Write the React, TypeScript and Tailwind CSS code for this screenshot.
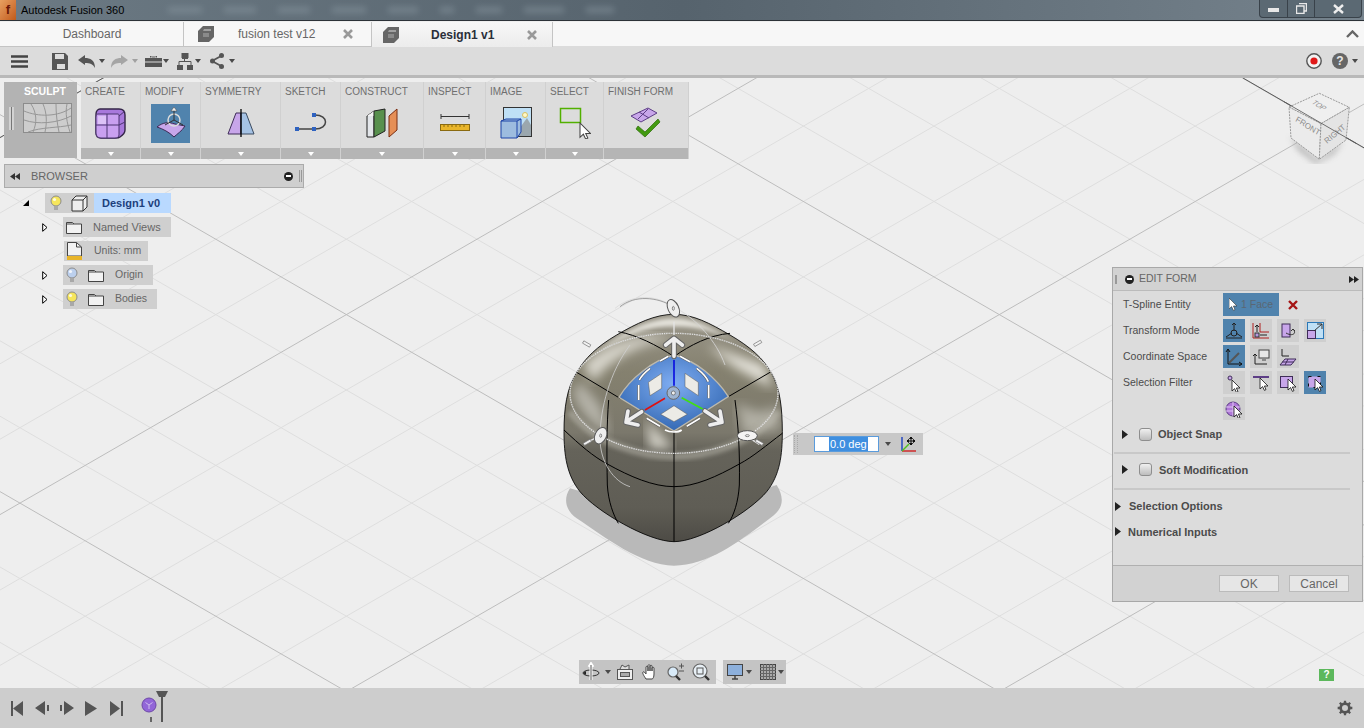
import type { ReactNode } from 'react';

const FONT = '[font-family:"Liberation_Sans",Arial,sans-serif]';

function Ic({ w, h, children, className }: { w: number; h: number; children: ReactNode; className?: string }) {
  return (
    <svg width={w} height={h} viewBox={`0 0 ${w} ${h}`} className={`shrink-0 ${className ?? ''}`}>
      {children}
    </svg>
  );
}

function Caret({ className }: { className?: string }) {
  return (
    <Ic w={6} h={4} className={className}>
      <path d="M0 0h6L3 4z" fill="#4a4a4a" />
    </Ic>
  );
}

function GridFloor() {
  const s = 0.5774;
  const minor: string[] = [];
  const major: string[] = [];
  for (let k = -20; k < 20; k++) {
    const c = 114.6 + 75.4 * k;
    const d = 514.6 + 75.4 * k;
    const a = `M0 ${c}L1364 ${c + 1364 * s}`;
    const b = `M0 ${d}L1364 ${d - 1364 * s}`;
    (k % 5 === 0 ? major : minor).push(a);
    (k % 5 === 0 ? major : minor).push(b);
  }
  return (
    <svg className="absolute inset-0" width={1364} height={610} viewBox="0 78 1364 610">
      <path d={minor.join('')} stroke="#dedede" strokeWidth="1" fill="none" />
      <path d={major.join('')} stroke="#bdbdbd" strokeWidth="1" fill="none" />
      <path d="M0 137.6L238 0M1243 78L1364 147.8" stroke="#5a5a5a" strokeWidth="1" fill="none" />
    </svg>
  );
}

function ViewCube() {
  return (
    <svg className="absolute left-[1284px] top-[10px]" width={72} height={76} viewBox="0 0 72 76">
      <defs>
        <filter id="cubeBlur"><feGaussianBlur stdDeviation="3" /></filter>
      </defs>
      <path d="M6 48L34 72L60 52L50 66L32 76L14 62z" fill="#999" opacity=".7" filter="url(#cubeBlur)" />
      <path d="M35.3 5.3L65.3 19.3L37 35.7L5 19z" fill="#efefef" stroke="#999" strokeDasharray="2 1" />
      <path d="M5 19L37 35.7L35.3 71.3L7 50z" fill="#ebebeb" stroke="#999" strokeDasharray="2 1" />
      <path d="M37 35.7L65.3 19.3L62 52L35.3 71.3z" fill="#e4e4e4" stroke="#999" strokeDasharray="2 1" />
      <text x="0" y="0" transform="translate(27 15) rotate(32) skewX(-25)" fontSize="7" fill="#8c8c8c" fontFamily="Liberation Sans">TOP</text>
      <text x="0" y="0" transform="translate(11 33) rotate(28) skewY(4)" fontSize="8" fill="#8c8c8c" fontFamily="Liberation Sans">FRONT</text>
      <text x="0" y="0" transform="translate(43 56) rotate(-40)" fontSize="8" fill="#8c8c8c" fontFamily="Liberation Sans">RIGHT</text>
      <path d="M0 13.7L72 55.3" stroke="#5a5a5a" opacity=".85" />
    </svg>
  );
}

function SculptModel() {
  const outline =
    'M372 88C430 88 480 115 540 150C600 185 640 220 665 265C690 310 697 370 697 440C697 510 690 570 650 620C600 680 450 770 372 770C295 770 140 680 90 620C50 570 42 510 42 440C42 370 50 310 80 262C105 220 140 185 200 150C260 115 315 88 372 88Z';
  return (
    <svg className="absolute left-[550px] top-[207px]" width={250} height={290} viewBox="0 0 750 870">
      <defs>
        <linearGradient id="bodyFill" x1="0" y1="0" x2="0" y2="1">
          <stop offset="0" stopColor="#9a968a" />
          <stop offset=".25" stopColor="#85816f" />
          <stop offset=".52" stopColor="#7b786c" />
          <stop offset=".6" stopColor="#65635a" />
          <stop offset=".85" stopColor="#5f5d55" />
          <stop offset="1" stopColor="#4d4b45" />
        </linearGradient>
        <radialGradient id="blueFill" cx=".5" cy=".38" r=".62">
          <stop offset="0" stopColor="#7fadf2" />
          <stop offset="1" stopColor="#3469b4" />
        </radialGradient>
        <filter id="soft"><feGaussianBlur stdDeviation="16" /></filter>
        <filter id="softer"><feGaussianBlur stdDeviation="7" /></filter>
        <clipPath id="bodyClip"><path d={outline} /></clipPath>
      </defs>
      <path d="M60 610C40 640 45 675 80 700C170 760 270 840 372 842C480 842 580 760 660 700C700 672 705 640 680 600L372 700Z" fill="#b9b9b9" />
      <path d={outline} fill="url(#bodyFill)" />
      <g clipPath="url(#bodyClip)">
        <path d="M372 100C450 100 520 150 590 190C560 170 470 120 372 125C280 120 190 170 140 210C200 150 290 100 372 100Z" fill="#e4e2da" filter="url(#softer)" />
        <path d="M100 240C170 170 290 140 372 160C300 170 200 200 130 290Z" fill="#d8d6cc" filter="url(#soft)" />
        <path d="M470 180L640 240L670 310L560 250Z" fill="#e6e4dc" filter="url(#soft)" />
        <path d="M70 320C85 380 130 420 180 450L150 360L90 290Z" fill="#b5b3a9" filter="url(#soft)" />
        <path d="M290 400C320 450 360 470 372 490L300 490Z" fill="#d5d3c9" filter="url(#soft)" />
        <path d="M560 350C600 380 650 390 680 360L690 430L580 450Z" fill="#b0aea3" filter="url(#soft)" />
        <path d="M60 380C140 480 280 515 372 515C470 515 600 480 685 380" fill="none" stroke="#b8b6ab" strokeWidth="22" opacity=".55" filter="url(#softer)" />
      </g>
      <g fill="none" stroke="#000" strokeWidth="3">
        <path d={outline} strokeWidth="2.5" />
        <path d="M205 140C260 150 320 180 372 215C420 180 480 150 540 145" />
        <path d="M80 262L210 340M660 262L535 335" />
        <path d="M42 435C90 480 130 515 172 537C240 575 310 605 372 605C435 605 500 575 568 537C610 515 650 480 697 445" />
        <path d="M372 440V770" />
        <path d="M176 345C170 420 170 500 172 600C175 650 190 690 205 715" />
        <path d="M555 345C565 420 570 500 568 600C565 650 552 690 535 715" />
      </g>
      <ellipse cx="372" cy="325" rx="312" ry="180" fill="none" stroke="#e9e9e9" strokeWidth="4" strokeDasharray="5 2" opacity=".9" />
      <ellipse cx="372" cy="325" rx="312" ry="180" fill="none" stroke="#666" strokeWidth="1" strokeDasharray="2 4" />
      <path d="M195 70C250 25 320 30 370 65C440 100 500 170 525 240" fill="none" stroke="#d8d8d8" strokeWidth="3" opacity=".8" />
      <path d="M210 65C255 30 320 35 370 65" fill="none" stroke="#777" strokeWidth="2" />
      <path d="M240 180C180 260 150 370 150 460C150 530 190 590 240 605" fill="none" stroke="#cfcfcf" strokeWidth="3" opacity=".8" />
      <path d="M372 110V150M110 472L135 460M628 478L600 460" stroke="#e5e5e5" strokeWidth="4" />
      <path d="M207 337C240 280 310 225 372 210C435 225 500 280 535 335L372 438Z" fill="url(#blueFill)" stroke="#bdb9ad" strokeWidth="4" />
      <path d="M268 285C275 270 290 258 300 250M330 228L355 214M390 214L420 230M440 250C455 262 468 272 475 290M266 300V345M476 300V340M290 400L330 424M450 400L410 424" fill="none" stroke="#555" strokeWidth="8" />
      <path d="M268 285C275 270 290 258 300 250M330 228L355 214M390 214L420 230M440 250C455 262 468 272 475 290M266 300V345M476 300V340M290 400L330 424M450 400L410 424" fill="none" stroke="#fff" strokeWidth="5" />
      <path d="M345 435C360 443 385 443 395 435" fill="none" stroke="#fff" strokeWidth="5" />
      <path d="M295 292L335 265V310L300 332Z M405 265L445 292V332L405 305Z M372 362L412 388L372 410L332 388Z" fill="#ecebe6" stroke="#555" strokeWidth="1.5" />
      <path d="M372 225V302" stroke="#0a10e0" strokeWidth="5" />
      <path d="M345 340L285 375" stroke="#e01010" strokeWidth="5" />
      <path d="M395 338L458 372" stroke="#40e010" strokeWidth="5" />
      <circle cx="370" cy="324" r="19" fill="#9fb4d0" stroke="#666" strokeWidth="3" />
      <circle cx="370" cy="324" r="6" fill="#eee" stroke="#555" strokeWidth="2" />
      <g fill="none" strokeLinejoin="round" strokeLinecap="round">
        <path d="M372 214V165M347 180L372 160L397 180M275 380L232 408M234 378L228 412L264 420M465 378L510 408M510 378L516 412L480 420" stroke="#666" strokeWidth="17" />
        <path d="M372 214V165M347 180L372 160L397 180M275 380L232 408M234 378L228 412L264 420M465 378L510 408M510 378L516 412L480 420" stroke="#eee" strokeWidth="11" />
      </g>
      <ellipse cx="370" cy="70" rx="16" ry="28" transform="rotate(-25 370 70)" fill="#eee" stroke="#555" strokeWidth="3" />
      <ellipse cx="370" cy="70" rx="3" ry="6" fill="none" stroke="#555" strokeWidth="2" />
      <ellipse cx="152" cy="452" rx="17" ry="26" transform="rotate(25 152 452)" fill="#eee" stroke="#555" strokeWidth="3" />
      <ellipse cx="152" cy="452" rx="3" ry="5" fill="none" stroke="#555" strokeWidth="2" />
      <ellipse cx="592" cy="452" rx="30" ry="15" fill="#f4f4f4" stroke="#555" strokeWidth="3" />
      <ellipse cx="592" cy="452" rx="6" ry="3" fill="none" stroke="#555" strokeWidth="2" />
      <g fill="#f2f2f2" stroke="#777" strokeWidth="2">
        <rect x="-12" y="-4" width="24" height="8" transform="translate(110 177) rotate(30)" />
        <rect x="-12" y="-4" width="24" height="8" transform="translate(623 175) rotate(-30)" />
        <rect x="-12" y="-4" width="24" height="8" transform="translate(112 472) rotate(-30)" />
        <rect x="-12" y="-4" width="24" height="8" transform="translate(628 472) rotate(30)" />
      </g>
    </svg>
  );
}

const cursor = 'M0 0L0 11L2.6 8.6L4.4 12.4L6 11.6L4.4 8L8 8Z';

function RibbonGroup({ label, width, icon, active, noCaret }: { label: string; width: number; icon: ReactNode; active?: boolean; noCaret?: boolean }) {
  return (
    <div className="flex h-[77px] flex-col border-r border-[#d0d0d0] bg-[#dcdcdc]" style={{ width }}>
      <div className="h-[18px] whitespace-nowrap pl-1 pt-[3px] text-[10px] leading-[13px] text-[#6f6f6f]">{label}</div>
      <div className="flex flex-1 items-center justify-center pb-[2px]">
        <div className={`flex h-[39px] w-[39px] items-center justify-center ${active ? 'bg-[#5083ad]' : ''}`}>{icon}</div>
      </div>
      <div className="flex h-[11px] items-center justify-center bg-[#b5b5b5]">
        {!noCaret && (
          <Ic w={6} h={4}>
            <path d="M0 0h6L3 4z" fill="#fff" />
          </Ic>
        )}
      </div>
    </div>
  );
}

function Ribbon() {
  return (
    <div className="absolute left-1 top-1 flex items-start">
      <div className="mr-1 flex h-[76px] w-[73px] flex-col bg-[#b3b3b3]">
        <div className="h-[18px] pl-[20px] pt-[3px] text-[10.5px] font-bold leading-[13px] text-white">SCULPT</div>
        <div className="flex items-center gap-[9px] pl-[5px] pt-[3px]">
          <Ic w={5} h={23}>
            <path d="M1 0V23M4 0V23" stroke="#f2f2f2" strokeWidth="1" />
            <path d="M2.5 0V23" stroke="#777" strokeWidth="1" />
          </Ic>
          <Ic w={49} h={30}>
            <rect x=".5" y=".5" width="48" height="29" fill="#cdcdcd" stroke="#8c8c8c" />
            <path d="M1 8C15 14 35 14 48 5M1 17C15 22 35 20 48 13M5 29C18 24 35 25 48 22M8 1C14 10 14 20 10 29M20 1C24 10 24 20 22 29M33 1C33 10 34 20 36 29M44 1C42 10 44 20 47 29" stroke="#979797" fill="none" />
          </Ic>
        </div>
      </div>
      <RibbonGroup
        label="CREATE"
        width={60}
        icon={
          <Ic w={31} h={31}>
            <path d="M5 1H24C28 1 30 3 30 7V22C30 25 28 27 25 29C24 30 22 30 20 30H6C3 30 1 28 1 25V6C1 3 3 1 5 1Z" fill="#a878dc" stroke="#332447" strokeWidth="1.4" />
            <path d="M3 6H23C24 6 24 7 24 8V27C24 29 22 30 20 30H6C3 30 1 28 1 25V9C1 7 2 6 3 6Z" fill="#c9a0f0" stroke="#4b3570" />
            <path d="M12 6V30M1 17H24M24 8L30 3M24 17L30 14" stroke="#4b3570" fill="none" />
            <path d="M3 8H11V16H3z" fill="#dcc2f6" />
          </Ic>
        }
      />
      <RibbonGroup
        label="MODIFY"
        width={60}
        active
        icon={
          <Ic w={32} h={32}>
            <path d="M2 20C8 15 14 15 20 17L30 19C27 24 22 27 19 30C14 25 8 22 2 20Z" fill="#c8a6ea" stroke="#3c2a55" />
            <circle cx="19" cy="13" r="6" fill="none" stroke="#dcdcdc" strokeWidth="1.5" />
            <path d="M19 2V13L10 18M19 13L28 18" stroke="#333" fill="none" />
            <path d="M16 4L19 0L22 4Z" fill="#eee" stroke="#444" strokeWidth=".5" />
          </Ic>
        }
      />
      <RibbonGroup
        label="SYMMETRY"
        width={80}
        icon={
          <Ic w={28} h={28}>
            <path d="M9 4H14V25H1Z" fill="#c8a6ea" stroke="#3f2d58" />
            <path d="M14 4H19L27 25H14Z" fill="#a5c2e4" stroke="#3a4a60" />
            <path d="M14 0V28" stroke="#000" strokeWidth="1.3" />
          </Ic>
        }
      />
      <RibbonGroup
        label="SKETCH"
        width={60}
        icon={
          <Ic w={32} h={22}>
            <path d="M2 17H20C34 17 34 3 20 3" fill="none" stroke="#444" strokeWidth="1.5" />
            <path d="M0 15h4v4H0zM17 15h4v4h-4zM17 1h4v4h-4z" fill="#2e62c0" />
          </Ic>
        }
      />
      <RibbonGroup
        label="CONSTRUCT"
        width={83}
        icon={
          <Ic w={32} h={30}>
            <path d="M1 8L8 3V29H1Z" fill="#e3e6ea" stroke="#222" />
            <path d="M1 8H15L8 3M8 8H1" fill="#f4f4f4" />
            <path d="M8 3L19 1V23L8 29Z" fill="#58904e" stroke="#222" />
            <path d="M23 8L31 1V22L23 29Z" fill="#e68f56" stroke="#7a2c10" />
          </Ic>
        }
      />
      <RibbonGroup
        label="INSPECT"
        width={62}
        icon={
          <Ic w={30} h={18}>
            <path d="M1 0V5M29 0V5M1 2.5H29" stroke="#333" fill="none" />
            <rect x=".5" y="10.5" width="29" height="6" fill="#e9b52a" stroke="#8a6a10" />
            <path d="M4 11V13M8 11V13M12 11V13M16 11V13M20 11V13M24 11V13" stroke="#8a6a10" />
          </Ic>
        }
      />
      <RibbonGroup
        label="IMAGE"
        width={60}
        icon={
          <Ic w={32} h={32}>
            <rect x="3.5" y=".5" width="28" height="29" fill="#bfe0f6" stroke="#333" />
            <path d="M14 29L27 11L31 18V29Z" fill="#9ba7ae" />
            <circle cx="25" cy="8" r="2.5" fill="#fff8c8" stroke="#d8c060" />
            <path d="M1 14L6 12H21V25L17 31H1Z" fill="#9dbcdf" stroke="#1c45a8" />
            <path d="M1 14H17V31M17 14L21 12" fill="none" stroke="#1c45a8" />
          </Ic>
        }
      />
      <RibbonGroup
        label="SELECT"
        width={58}
        icon={
          <Ic w={32} h={32}>
            <rect x="1.5" y="1.5" width="20" height="14" fill="none" stroke="#52b000" strokeWidth="1.5" />
            <path d={cursor} transform="translate(21 16) scale(1.3)" fill="#fff" stroke="#444" strokeWidth=".8" />
          </Ic>
        }
      />
      <RibbonGroup
        label="FINISH FORM"
        width={85}
        noCaret
        icon={
          <Ic w={32} h={32}>
            <path d="M1 9L18 1L27 6L11 15Z" fill="#c8a6ea" stroke="#5d3e86" />
            <path d="M9 5L19 11M18 2L8 12" stroke="#5d3e86" fill="none" />
            <path d="M8 19L15 25L28 12L30 15L15 30L6 22Z" fill="#429a10" stroke="#2c6a08" strokeWidth=".7" />
          </Ic>
        }
      />
    </div>
  );
}

function Bulb({ blue }: { blue?: boolean }) {
  return (
    <Ic w={12} h={16}>
      <circle cx="6" cy="6" r="5" fill={blue ? '#bcd0ee' : '#f6e65c'} stroke="#8c8c8c" />
      <circle cx="4.5" cy="4.5" r="1.6" fill="#fff" opacity=".8" />
      <rect x="4" y="11" width="4" height="4" fill="#a8a8a8" />
    </Ic>
  );
}

function Folder() {
  return (
    <Ic w={16} h={13}>
      <path d="M.5 12.5V1.5H6.5L8 3H15.5V12.5Z" fill="#f2f2f2" stroke="#444" />
      <path d="M.5 3H8" stroke="#444" />
    </Ic>
  );
}

function Expand() {
  return (
    <Ic w={6} h={9}>
      <path d="M.7.7L5 4.5L.7 8.3Z" fill="#fff" stroke="#000" />
    </Ic>
  );
}

function BrowserPanel() {
  return (
    <div className="absolute left-1 top-[86px] w-[300px] text-[#666]">
      <div className="flex h-6 items-center border border-[#ababab] bg-[#cfcfcf] pl-[5px]">
        <Ic w={10} h={7}>
          <path d="M5 0V7L0 3.5ZM10 0V7L5 3.5Z" fill="#333" />
        </Ic>
        <span className="ml-[11px] text-[11px] text-[#666]">BROWSER</span>
        <div className="ml-auto flex items-center gap-[6px] pr-[1px]">
          <span className="flex h-[9px] w-[9px] items-center justify-center rounded-full bg-[#222]">
            <span className="h-[1.5px] w-[5px] bg-white" />
          </span>
          <span className="h-3 w-[3px] border-x border-[#999]" />
        </div>
      </div>
      <div className="mt-[5px] flex flex-col gap-1 text-[10.5px]">
        <div className="flex h-5 items-center">
          <Ic w={6} h={6} className="ml-[19px] mr-[16px]">
            <path d="M6 0V6H0Z" fill="#000" />
          </Ic>
          <div className="flex h-5 w-[126px] items-center bg-[#cfcfcf] pl-[5px]">
            <Bulb />
            <Ic w={17} h={17} className="ml-[9px]">
              <path d="M1 5L5 1H16V12L12 16H1Z" fill="#eee" stroke="#333" />
              <path d="M1 5H12V16M12 5L16 1" fill="none" stroke="#333" />
            </Ic>
            <div className="ml-[6px] flex h-5 flex-1 items-center justify-center bg-[#b9d9ff] pr-[3px] text-[11px] font-bold text-[#1d3f7c]">Design1 v0</div>
          </div>
        </div>
        <div className="flex h-5 items-center pl-[38px]">
          <Expand />
          <div className="ml-[15px] flex h-5 w-[108px] items-center bg-[#cfcfcf] pl-[3px]">
            <Folder />
            <span className="ml-[11px] text-[11px]">Named Views</span>
          </div>
        </div>
        <div className="flex h-5 items-center pl-[60px]">
          <div className="flex h-5 w-[84px] items-center bg-[#cfcfcf] pl-[3px]">
            <Ic w={15} h={18}>
              <path d="M.5 14V.5H9.5L14.5 5V14Z" fill="#f2f2f2" stroke="#444" />
              <path d="M9.5.5V5H14.5" fill="none" stroke="#444" />
              <rect x="0" y="14" width="15" height="4" fill="#e9b52a" />
            </Ic>
            <span className="ml-3">Units: mm</span>
          </div>
        </div>
        {[
          { name: 'Origin', w: 90, blue: true },
          { name: 'Bodies', w: 94, blue: false },
        ].map(row => (
          <div key={row.name} className="flex h-5 items-center pl-[38px]">
            <Expand />
            <div className="ml-[15px] flex h-5 items-center bg-[#cfcfcf] pl-[3px]" style={{ width: row.w }}>
              <Bulb blue={row.blue} />
              <span className="ml-[10px] flex">
                <Folder />
              </span>
              <span className="ml-[11px]">{row.name}</span>
            </div>
          </div>
        ))}
      </div>
    </div>
  );
}

function FormBtn({ active, children }: { active?: boolean; children: ReactNode }) {
  return <div className={`flex h-[23px] w-[22px] items-center justify-center ${active ? 'bg-[#5083ad]' : 'bg-[#cfcfcf]'}`}>{children}</div>;
}

function FormRow({ label, children }: { label: string; children: ReactNode }) {
  return (
    <div className="flex items-center">
      <span className="w-[100px] whitespace-nowrap text-[10.5px] text-[#4b4b4b]">{label}</span>
      <div className="flex gap-[5px]">{children}</div>
    </div>
  );
}

function Cur({ x = 7, y = 6 }: { x?: number; y?: number }) {
  return <path d={cursor} transform={`translate(${x} ${y})`} fill="#fff" stroke="#111" strokeWidth=".8" />;
}

function Arrow() {
  return (
    <Ic w={6} h={9}>
      <path d="M0 0L6 4.5L0 9Z" fill="#222" />
    </Ic>
  );
}

function EditForm() {
  return (
    <div className="absolute left-[1112px] top-[189px] flex h-[335px] w-[251px] flex-col border border-[#a8a8a8] bg-[#dcdcdc]">
      <div className="flex h-[23px] items-center border-b border-[#bbb] bg-[#d2d2d2] pl-[2px] pr-[3px]">
        <span className="h-[9px] w-[2px] border-x border-[#999]" />
        <span className="ml-[8px] flex h-[9px] w-[9px] items-center justify-center rounded-full bg-[#222]">
          <span className="h-[1.5px] w-[5px] bg-white" />
        </span>
        <span className="ml-[5px] text-[10.5px] text-[#666]">EDIT FORM</span>
        <Ic w={10} h={7} className="ml-auto">
          <path d="M0 0V7L5 3.5ZM5 0V7L10 3.5Z" fill="#222" />
        </Ic>
      </div>
      <div className="flex flex-col gap-[3px] pl-[10px] pt-[2px]">
        <div className="flex items-center">
          <span className="w-[100px] text-[10.5px] text-[#4b4b4b]">T-Spline Entity</span>
          <div className="flex h-[23px] w-[56px] items-center bg-[#5083ad] pl-[6px]">
            <Ic w={9} h={13}>
              <path d={cursor} fill="#fff" stroke="#333" strokeWidth=".6" />
            </Ic>
            <span className="ml-[3px] whitespace-nowrap text-[10.5px] text-[#5a6773]">1 Face</span>
          </div>
          <Ic w={10} h={10} className="ml-[9px]">
            <path d="M1 1L9 9M9 1L1 9" stroke="#a51414" strokeWidth="2.4" />
          </Ic>
        </div>
        <FormRow label="Transform Mode">
          <FormBtn active>
            <Ic w={18} h={18}>
              <circle cx="9" cy="11" r="3" fill="none" stroke="#222" />
              <path d="M9 1V9M7 11L1 15M11 11L17 15M1 16H17M7 3L9 1L11 3" stroke="#222" fill="none" />
            </Ic>
          </FormBtn>
          <FormBtn>
            <Ic w={18} h={18}>
              <path d="M1 1V16H17M8 1V10H17" stroke="#b02020" fill="none" />
              <rect x="3" y="11" width="4" height="4" fill="#b79ae0" stroke="#333" />
              <path d="M5 10V3M3 5L5 3L7 5M8 13H15" stroke="#222" fill="none" />
            </Ic>
          </FormBtn>
          <FormBtn>
            <Ic w={18} h={18}>
              <rect x="3" y="2" width="8" height="13" fill="#c8a6ea" stroke="#3f2d58" />
              <path d="M7 11C14 15 18 11 14 7M14 7L12 9M14 7L16 9" stroke="#333" fill="none" />
            </Ic>
          </FormBtn>
          <FormBtn>
            <Ic w={17} h={17}>
              <rect x=".5" y=".5" width="16" height="16" fill="#bfe0f6" stroke="#2a78b8" />
              <rect x=".5" y="8.5" width="8" height="8" fill="#c8a6ea" stroke="#3f2d58" />
              <path d="M7 9L15 2M10 2H15V7" stroke="#333" fill="none" />
            </Ic>
          </FormBtn>
        </FormRow>
        <FormRow label="Coordinate Space">
          <FormBtn active>
            <Ic w={18} h={18}>
              <path d="M3 1V16H17" stroke="#111" fill="none" />
              <path d="M4 15L14 5" stroke="#555" strokeWidth="2" />
              <path d="M1 4L3 1L5 4M14 14L17 16L14 18" stroke="#111" fill="none" />
            </Ic>
          </FormBtn>
          <FormBtn>
            <Ic w={18} h={18}>
              <path d="M3 6V16H15M1 8L3 6L5 8" stroke="#222" fill="none" />
              <rect x="7" y="2" width="10" height="8" fill="#e8e8e8" stroke="#444" />
              <path d="M10 12H14" stroke="#444" />
            </Ic>
          </FormBtn>
          <FormBtn>
            <Ic w={18} h={18}>
              <path d="M3 1V8H10" stroke="#222" fill="none" />
              <path d="M6 11H17L12 17H1Z" fill="#c8a6ea" stroke="#3f2d58" />
              <path d="M9 11L6 17M3 14H15" stroke="#3f2d58" />
            </Ic>
          </FormBtn>
        </FormRow>
        <FormRow label="Selection Filter">
          <FormBtn>
            <Ic w={18} h={18}>
              <circle cx="5" cy="4" r="2" fill="#c8a6ea" stroke="#3f2d58" />
              <Cur />
            </Ic>
          </FormBtn>
          <FormBtn>
            <Ic w={18} h={18}>
              <path d="M1 3H17" stroke="#5d3e86" strokeWidth="2" />
              <Cur x={8} y={4} />
            </Ic>
          </FormBtn>
          <FormBtn>
            <Ic w={18} h={18}>
              <rect x="1.5" y="2.5" width="12" height="11" fill="#c8a6ea" stroke="#3f2d58" />
              <Cur x={9} y={5} />
            </Ic>
          </FormBtn>
          <FormBtn active>
            <Ic w={18} h={18}>
              <rect x="2.5" y="2.5" width="12" height="11" fill="#c8a6ea" stroke="#111" strokeDasharray="3 6" />
              <Cur x={9} y={5} />
            </Ic>
          </FormBtn>
        </FormRow>
        <div className="ml-[100px]">
          <FormBtn>
            <Ic w={18} h={18}>
              <ellipse cx="8" cy="9" rx="7" ry="7" fill="#b078d8" stroke="#5d3e86" />
              <path d="M1 7H15M1 11H15M8 2V16" stroke="#e0c8f4" />
              <Cur x={9} y={6} />
            </Ic>
          </FormBtn>
        </div>
      </div>
      <div className="flex items-center pl-[9px] pt-[6px] text-[11px] font-bold text-[#4b4b4b]">
        <Arrow />
        <span className="ml-[11px] h-[13px] w-[13px] rounded-[3px] border border-[#8e8e8e] bg-gradient-to-b from-[#f0f0f0] to-[#bdbdbd]" />
        <span className="ml-[6px]">Object Snap</span>
      </div>
      <div className="ml-[1px] mr-[12px] mt-[9px] h-[2px] bg-[#c8c8c8]" />
      <div className="flex items-center pl-[9px] pt-[8px] text-[11px] font-bold text-[#4b4b4b]">
        <Arrow />
        <span className="ml-[11px] h-[13px] w-[13px] rounded-[3px] border border-[#8e8e8e] bg-gradient-to-b from-[#f0f0f0] to-[#bdbdbd]" />
        <span className="ml-[7px]">Soft Modification</span>
      </div>
      <div className="ml-[1px] mr-[12px] mt-[10px] h-[2px] bg-[#c8c8c8]" />
      <div className="flex items-center pl-[2px] pt-[8px] text-[11px] font-bold text-[#4b4b4b]">
        <Arrow />
        <span className="ml-[8px]">Selection Options</span>
      </div>
      <div className="flex items-center pl-[2px] pt-[9px] text-[11px] font-bold text-[#4b4b4b]">
        <Arrow />
        <span className="ml-[7px]">Numerical Inputs</span>
      </div>
      <div className="mt-auto flex h-[36px] items-center justify-end gap-[10px] border-t border-[#b0b0b0] bg-[#d2d2d2] pr-[13px] text-[12px] text-[#666]">
        <div className="flex h-[17px] w-[60px] items-center justify-center border border-[#bbb] bg-[#e6e6e6]">OK</div>
        <div className="flex h-[17px] w-[60px] items-center justify-center border border-[#bbb] bg-[#e6e6e6]">Cancel</div>
      </div>
    </div>
  );
}

function AngleInput() {
  return (
    <div className="absolute left-[793px] top-[355px] flex h-[22px] w-[130px] items-center bg-[#c8c8c8] pl-[1px] text-[11px]">
      <span className="h-[18px] w-[4px] border-x border-dotted border-[#aaa]" />
      <div className="ml-[16px] flex h-[16px] w-[65px] items-center border border-[#5a9bdc] bg-white pl-[14px]">
        <span className="whitespace-nowrap bg-[#3f8fe0] px-[1px] leading-[14px] text-white">0.0 deg</span>
      </div>
      <Caret className="ml-[6px]" />
      <Ic w={18} h={18} className="ml-[8px]">
        <path d="M3 2V16" stroke="#1a3fc0" strokeWidth="1.4" fill="none" />
        <path d="M3 16H17" stroke="#d02020" strokeWidth="1.4" />
        <path d="M3 16L10 9" stroke="#50c020" strokeWidth="1.4" />
        <path d="M12 2V10M8 6H16M12 2L10.5 3.5H13.5ZM12 10L10.5 8.5H13.5ZM8 6L9.5 4.5V7.5ZM16 6L14.5 4.5V7.5Z" stroke="#111" fill="#111" />
      </Ic>
    </div>
  );
}

function NavBar() {
  return (
    <div className="absolute left-[579px] top-[582px] flex items-start gap-[7px]">
      <div className="flex h-6 w-[137px] items-center bg-[#c4c4c4] pl-[3px]">
        <Ic w={20} h={20}>
          <ellipse cx="9" cy="11" rx="8" ry="3" fill="none" stroke="#333" />
          <path d="M9 18V3M7 5L9 2L11 5" stroke="#fff" strokeWidth="3" fill="none" />
          <path d="M9 18V3" stroke="#555" strokeWidth="1" />
          <path d="M1 11L4 9V13Z" fill="#222" />
        </Ic>
        <Caret className="ml-[3px]" />
        <Ic w={17} h={17} className="ml-[6px]">
          <rect x=".5" y="5.5" width="15" height="10" fill="#eee" stroke="#555" />
          <rect x="3.5" y="8.5" width="9" height="4" fill="#aaa" stroke="#555" />
          <path d="M3 5L5 1L8 3L12 1V5" fill="#ddd" stroke="#555" />
        </Ic>
        <Ic w={18} h={18} className="ml-[7px]">
          <path d="M5 16C3 13 1 10 2 9C3 8 4 10 5 11V4C5 3 7 3 7 4V8V2.5C7 1.5 9 1.5 9 2.5V8V3C9 2 11 2 11 3V8V5C11 4 13 4 13 5V11C13 14 12 16 11 16Z" fill="#fff" stroke="#444" />
        </Ic>
        <Ic w={18} h={18} className="ml-[7px]">
          <circle cx="7" cy="9" r="5" fill="#d8eaf8" stroke="#666" strokeWidth="1.2" />
          <path d="M10 13L14 17" stroke="#333" strokeWidth="2.4" />
          <path d="M13 3H18M15.5 .5V5.5M13 8H18" stroke="#555" />
        </Ic>
        <Ic w={18} h={18} className="ml-[8px]">
          <circle cx="8" cy="8" r="7" fill="#e8f0f6" stroke="#666" strokeWidth="1.2" />
          <rect x="5" y="5" width="6" height="6" fill="none" stroke="#555" />
          <path d="M13 13L17 17" stroke="#333" strokeWidth="2.4" />
        </Ic>
      </div>
      <div className="flex h-6 w-[63px] items-center bg-[#c4c4c4] pl-[4px]">
        <Ic w={17} h={17}>
          <rect x=".5" y=".5" width="15" height="11" fill="#8db0dc" stroke="#444" />
          <path d="M5 15H11M8 12V15" stroke="#444" strokeWidth="1.5" />
        </Ic>
        <Caret className="ml-[2px]" />
        <Ic w={17} h={17} className="ml-[8px]">
          <rect x=".5" y=".5" width="15" height="15" fill="#aaa" stroke="#444" />
          <path d="M3.5 0V16M6.5 0V16M9.5 0V16M12.5 0V16M0 3.5H16M0 6.5H16M0 9.5H16M0 12.5H16" stroke="#666" />
        </Ic>
        <Caret className="ml-[1px]" />
      </div>
    </div>
  );
}

function Timeline() {
  return (
    <div className="flex h-10 items-center bg-[#cdcdcd] pl-[11px]">
      <Ic w={13} h={15}>
        <path d="M1 0V15" stroke="#555" strokeWidth="2" />
        <path d="M12 0V15L2 7.5Z" fill="#555" />
      </Ic>
      <Ic w={14} h={14} className="ml-[11px]">
        <path d="M10 0V14L0 7Z M12 4H14V10H12Z" fill="#555" />
      </Ic>
      <Ic w={14} h={14} className="ml-[11px]">
        <path d="M4 0V14L14 7Z M0 4H2V10H0Z" fill="#555" />
      </Ic>
      <Ic w={12} h={15} className="ml-[11px]">
        <path d="M0 0V15L12 7.5Z" fill="#555" />
      </Ic>
      <Ic w={13} h={15} className="ml-[13px]">
        <path d="M0 0V15L10 7.5Z" fill="#555" />
        <path d="M12 0V15" stroke="#555" strokeWidth="2" />
      </Ic>
      <Ic w={30} h={36} className="ml-[17px] mt-[1px] self-start">
        <circle cx="9" cy="16" r="7" fill="#9266d8" stroke="#6e48a8" />
        <path d="M9 16V20M9 16L5.5 13.5M9 16L12.5 13.5" stroke="#cfbcf0" fill="none" />
        <path d="M11 28V33" stroke="#666" strokeWidth="2" />
        <path d="M16 2H28L25 8H19Z" fill="#555" />
        <path d="M22 7V33" stroke="#555" strokeWidth="2" />
      </Ic>
      <svg width="16" height="16" viewBox="0 0 24 24" className="ml-auto mr-[11px]">
        <circle cx="12" cy="12" r="6.5" fill="none" stroke="#555" strokeWidth="4" />
        <path d="M12 1V5M12 19V23M1 12H5M19 12H23M4.2 4.2L7 7M17 17L19.8 19.8M4.2 19.8L7 17M17 7L19.8 4.2" stroke="#555" strokeWidth="3.4" />
      </svg>
    </div>
  );
}

function TabCube() {
  return (
    <Ic w={16} h={16}>
      <path d="M0 5L5 0H16V11L11 16H0Z" fill="#666" />
      <path d="M5 5H13V3H6Z" fill="#a0a0a0" />
      <path d="M5 7H11V11H5Z" fill="#8a8a8a" />
    </Ic>
  );
}

function TabClose() {
  return (
    <Ic w={10} h={10} className="ml-auto">
      <path d="M1 1L9 9M9 1L1 9" stroke="#999" strokeWidth="2.6" />
    </Ic>
  );
}

export default function App() {
  return (
    <div className={`relative flex h-[728px] w-[1364px] flex-col overflow-hidden bg-[#eeeeee] ${FONT}`}>
      {/* window title bar */}
      <div className="flex h-[21px] items-center border-b border-[#2c3238] bg-gradient-to-r from-[#6c7a84] via-[#56636d] to-[#76838d]">
        <div className="h-[20px] w-4 bg-gradient-to-br from-[#e8a060] to-[#c05a18] text-center text-[13px] font-bold leading-[20px] text-[#6a1808]">f</div>
        <span className="ml-[5px] whitespace-nowrap text-[11px] text-black">Autodesk Fusion 360</span>
        <div className="ml-[44px] flex gap-[22px] opacity-50 blur-[3px]">
          {[34, 32, 32, 34, 30, 14, 26, 40, 28].map((w, i) => (
            <span key={i} className="h-[6px] bg-[#8b99a3]" style={{ width: w }} />
          ))}
        </div>
        <div className="ml-auto mr-[2px] flex h-[18px] self-start rounded-b-[4px] border border-t-0 border-[#39424a] bg-[#5b6973] text-white">
          <div className="flex w-[28px] items-center justify-center border-r border-[#39424a]">
            <span className="mt-[3px] h-[4px] w-[11px] bg-[#e8e8e8]" />
          </div>
          <div className="flex w-[27px] items-center justify-center border-r border-[#39424a]">
            <Ic w={11} h={11}>
              <path d="M3 .5H10.5V8H8.5M.5 3H8V10.5H.5Z" fill="none" stroke="#e8e8e8" strokeWidth="1.4" />
            </Ic>
          </div>
          <div className="flex w-[46px] items-center justify-center">
            <Ic w={11} h={10}>
              <path d="M1 1L10 9M10 1L1 9" stroke="#eee" strokeWidth="2.4" />
            </Ic>
          </div>
        </div>
      </div>
      {/* tabs */}
      <div className="flex h-[26px] items-stretch border-t border-[#eee] bg-[#f7f7f7] text-[12px] text-[#666]">
        <div className="flex w-[184px] items-center justify-center border-b border-r border-[#c4c4c4] pl-[1px]">Dashboard</div>
        <div className="flex w-[188px] items-center border-b border-r border-[#c4c4c4] pl-[14px] pr-[18px]">
          <TabCube />
          <span className="ml-[24px]">fusion test v12</span>
          <TabClose />
        </div>
        <div className="flex w-[181px] items-center border-r border-[#c4c4c4] bg-gradient-to-b from-[#f7f7f7] to-[#ececec] pl-[11px] pr-[15px]">
          <TabCube />
          <span className="ml-[32px] font-bold text-[#2a2f3a]">Design1 v1</span>
          <TabClose />
        </div>
        <div className="flex flex-1 items-center justify-end border-b border-[#dcdcdc] pr-[5px]">
          <Ic w={13} h={8}>
            <path d="M1 7L6.5 1.5L12 7" fill="none" stroke="#666" strokeWidth="2.4" />
          </Ic>
        </div>
      </div>
      {/* quick access toolbar */}
      <div className="flex h-[28px] items-center bg-[#dcdcdc] pl-[11px]">
        <Ic w={17} h={13}>
          <path d="M0 1.5H17M0 6.5H17M0 11.5H17" stroke="#444" strokeWidth="2.6" />
        </Ic>
        <Ic w={16} h={17} className="ml-[24px]">
          <path d="M0 0H13L16 3V17H0Z" fill="#555" />
          <rect x="3" y="1" width="9" height="5" fill="#dcdcdc" />
          <rect x="5" y="11" width="8" height="5" fill="#dcdcdc" />
        </Ic>
        <Ic w={17} h={13} className="ml-[10px]">
          <path d="M0 5L7 0V3C12 3 17 5 17 13C15 9 12 8 7 8V10Z" fill="#555" />
        </Ic>
        <Caret className="ml-[4px]" />
        <Ic w={17} h={13} className="ml-[6px] opacity-40">
          <path d="M17 5L10 0V3C5 3 0 5 0 13C2 9 5 8 10 8V10Z" fill="#555" />
        </Ic>
        <Caret className="ml-[4px] opacity-40" />
        <Ic w={17} h={12} className="ml-[7px]">
          <path d="M0 3H5V1H12V3H17V12H0Z" fill="#555" />
          <path d="M6 3V2H11V3M0 7H17" stroke="#dcdcdc" fill="none" />
        </Ic>
        <Caret className="ml-[1px]" />
        <Ic w={16} h={17} className="ml-[8px]">
          <path d="M5 0H11V5H5ZM7.5 5V8M2 12V8.5H14V12" fill="none" stroke="#555" />
          <path d="M5 0H11V6H5ZM0 12H6V17H0ZM10 12H16V17H10Z" fill="#555" />
        </Ic>
        <Caret className="ml-[2px]" />
        <Ic w={14} h={16} className="ml-[9px]">
          <path d="M12 2.5L2 8L12 13.5" fill="none" stroke="#555" strokeWidth="1.8" />
          <circle cx="11.5" cy="2.5" r="2.5" fill="#555" />
          <circle cx="2.5" cy="8" r="2.5" fill="#555" />
          <circle cx="11.5" cy="13.5" r="2.5" fill="#555" />
        </Ic>
        <Caret className="ml-[5px]" />
        <div className="ml-auto flex items-center pr-[6px]">
          <Ic w={16} h={16}>
            <circle cx="8" cy="8" r="7.2" fill="#f2f2f2" stroke="#555" strokeWidth="1.4" />
            <circle cx="8" cy="8" r="3.6" fill="#e01818" />
          </Ic>
          <div className="ml-[10px] flex h-4 w-4 items-center justify-center rounded-full bg-[#666] text-[12px] font-bold leading-none text-[#e8e8e8]">?</div>
          <Caret className="ml-[4px]" />
        </div>
      </div>
      <div className="h-[3px] bg-[#b9b9b9]" />
      {/* canvas */}
      <div className="relative flex-1 overflow-hidden bg-[#eeeeee]">
        <GridFloor />
        <ViewCube />
        <SculptModel />
        <Ribbon />
        <BrowserPanel />
        <EditForm />
        <AngleInput />
        <NavBar />
        <div className="absolute left-[1319px] top-[591px] flex h-[12px] w-[15px] items-center justify-center bg-[#5cb85c] text-[10px] font-bold leading-none text-white">?</div>
      </div>
      <Timeline />
    </div>
  );
}
